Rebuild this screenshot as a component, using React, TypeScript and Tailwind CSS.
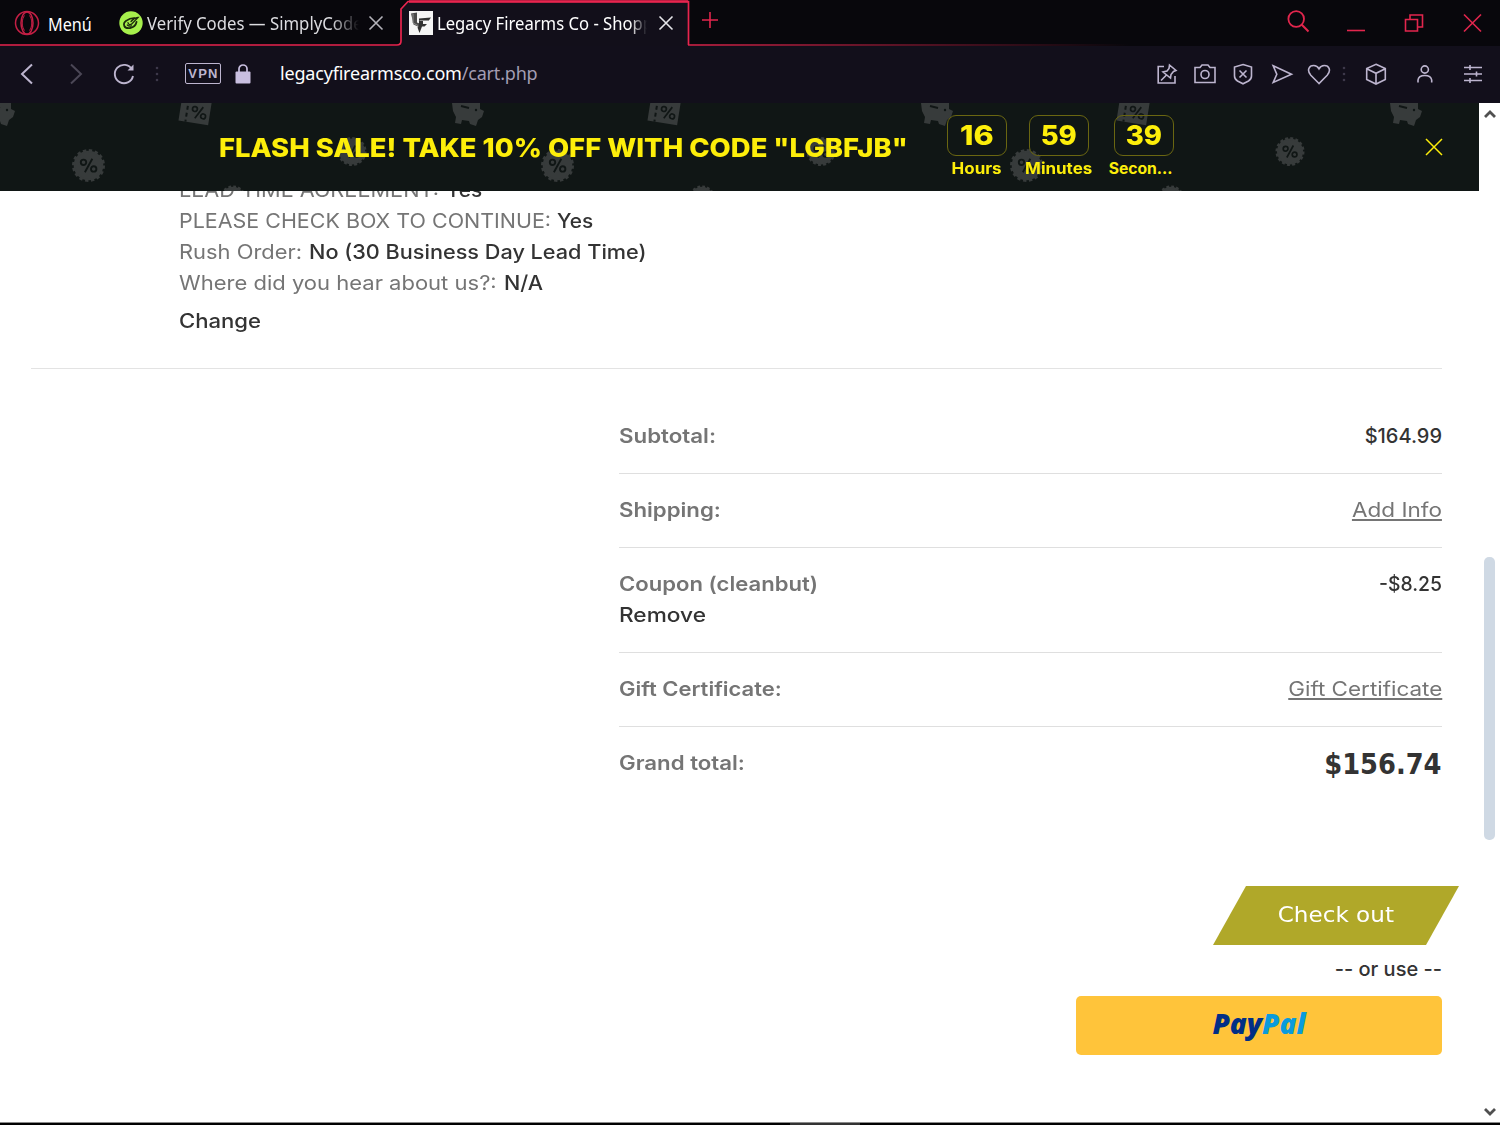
import type { ReactNode } from 'react';
import clsx from 'clsx';

type IconProps = { className?: string; children: ReactNode };

function Icon({ className, children }: IconProps) {
  return (
    <svg
      viewBox="0 0 24 24"
      className={clsx('size-6 shrink-0', className)}
      fill="none"
      stroke="currentColor"
      strokeWidth={1.6}
    >
      {children}
    </svg>
  );
}

function TabOutline() {
  return (
    <svg className="absolute inset-0" width="1500" height="46" fill="none">
      <defs>
        <linearGradient id="fade" gradientUnits="userSpaceOnUse" x1="689" x2="1130" y1="0" y2="0">
          <stop offset="0" stopColor="#e8254f" />
          <stop offset="1" stopColor="#e8254f" stopOpacity="0" />
        </linearGradient>
      </defs>
      <path d="M401 46V9L408 1.5H688.5V46Z" fill="#120f1a" />
      <path d="M0 45H397Q401 45 401 41V9L408 1.5H688.5V45" stroke="#e8254f" strokeWidth="1.7" />
      <path d="M688 1.5H409" stroke="#e8254f" strokeWidth="2.6" />
      <rect x="688" y="44.3" width="442" height="1.4" fill="url(#fade)" />
    </svg>
  );
}

function TabBar() {
  return (
    <div className="relative h-[46px] bg-[#08070c]">
      <TabOutline />
      <div className="relative flex h-[46px] items-center font-['Noto_Sans',sans-serif] text-[18px] text-[#dcdce0]">
        <svg className="ml-[14px] size-[26px] shrink-0" viewBox="0 0 26 26" fill="none" stroke="#c41f45">
          <circle cx="13" cy="13" r="11.5" strokeWidth="1.5" />
          <ellipse cx="13" cy="13" rx="6" ry="11" strokeWidth="1.5" />
          <path d="M10.5 5.5C7.5 9 7.5 17 10.5 20.5M15.5 5.5C18.5 9 18.5 17 15.5 20.5" strokeWidth="1" />
        </svg>
        <span className="ml-[8px] w-[70px] origin-left translate-y-[1px] scale-x-[0.9] text-white">Menú</span>

        <svg className="ml-[1px] size-6 shrink-0" viewBox="0 0 24 24" fill="none" stroke="#1c2a0c" strokeLinecap="round">
          <circle cx="12" cy="12" r="11.7" fill="#a6f04c" stroke="none" />
          <path d="M15.5 7.2Q11 7 7.5 9.6Q4 12 5.3 15Q6.5 17.6 11 17Q16.5 16 17.5 11" strokeWidth="1.8" />
          <path d="M9 11.7Q10 14.5 12.5 13.2L19 6.5Q15 6.8 12 10.5M8.3 14Q10 15.6 12.5 14.8" strokeWidth="1.3" />
        </svg>
        <span className="ml-[4px] h-[26px] w-[212px] overflow-hidden whitespace-nowrap leading-[26px] [mask-image:linear-gradient(to_right,black_87%,transparent)]">
          <span className="inline-block origin-left scale-x-[0.93]">Verify Codes — SimplyCodes</span>
        </span>
        <Icon className="ml-[5px] text-[#b4b3ba]">
          <path d="M5.5 5.5L18.5 18.5M18.5 5.5L5.5 18.5" />
        </Icon>

        <svg className="ml-[21px] size-6 shrink-0" viewBox="0 0 24 24">
          <rect width="24" height="24" fill="#f4f4f4" />
          <path d="M2 2.5L8 1.5V11.5L12 13V17L4.5 13.5Z" fill="#4a4a4a" />
          <path d="M10 7.5L22 6.5L19.5 10H14V13H18L15.5 15.5H13L10.5 22L8.5 16.5L10 15Z" fill="#303030" />
          <path d="M4 3V12L9 14.5M10.5 9.5H20" stroke="#8d8d8d" fill="none" />
        </svg>
        <span className="ml-[4px] h-[26px] w-[210px] overflow-hidden whitespace-nowrap leading-[26px] text-white [mask-image:linear-gradient(to_right,black_92%,transparent)]">
          <span className="inline-block origin-left scale-x-[0.925]">Legacy Firearms Co - Shopping</span>
        </span>
        <Icon className="ml-[7px] text-[#e6e6ea]">
          <path d="M5.5 5.5L18.5 18.5M18.5 5.5L5.5 18.5" />
        </Icon>
        <Icon className="ml-[20px] -translate-y-[3px] text-[#e2264d]">
          <path d="M12 4V20M4 12H20" />
        </Icon>

        <div className="ml-auto flex items-center gap-[34px] pr-[16px] text-[#e2264d]">
          <Icon className="-translate-y-[2px]">
            <circle cx="10.2" cy="10" r="7.8" strokeWidth="1.8" />
            <path d="M15.8 15.8L22.5 22.5" strokeWidth="2" />
          </Icon>
          <Icon>
            <path d="M3 19.5H21" />
          </Icon>
          <Icon>
            <path d="M3.5 8.5H15.5V20H3.5ZM8 8V4H20.5V16H16" />
          </Icon>
          <Icon>
            <path d="M4 3.5L21 20.5M21 3.5L4 20.5" />
          </Icon>
        </div>
      </div>
    </div>
  );
}

function Dots() {
  return (
    <svg className="h-[16px] w-[8px] shrink-0" viewBox="0 0 8 16" fill="#3d384a">
      <circle cx="4" cy="2" r="1.3" />
      <circle cx="4" cy="8" r="1.3" />
      <circle cx="4" cy="14" r="1.3" />
    </svg>
  );
}

function AddressBar() {
  return (
    <div className="flex h-[57px] items-center bg-[#120f1b] pb-[2px] text-[#bdb5cf]">
      <Icon className="ml-[14px]">
        <path d="M18 2.5L8 12L18 21.5" strokeWidth="2" />
      </Icon>
      <Icon className="ml-[26px] text-[#4b4756]">
        <path d="M7 2.5L17 12L7 21.5" strokeWidth="2" />
      </Icon>
      <Icon className="ml-[24px]">
        <path d="M20 7.5A9.2 9.2 0 1 0 21 14" strokeWidth="1.9" />
        <path d="M21.5 2.5V8.5H15.5Z" fill="currentColor" stroke="none" />
      </Icon>
      <span className="ml-[17px] flex">
        <Dots />
      </span>
      <span className="ml-[24px] flex h-[21px] w-[36px] items-center justify-center rounded-[2px] border-[1.5px] border-[#bdb5cf] pl-px font-['Liberation_Sans',sans-serif] text-[13px] font-bold tracking-[1.2px]">
        VPN
      </span>
      <svg className="ml-[14px] h-[20px] w-[16px] shrink-0" viewBox="0 0 16 20">
        <rect x="0.5" y="7.5" width="15" height="12" rx="1" fill="#c9bfe0" />
        <path d="M4 8V4.8A4 3.8 0 0 1 12 4.8V8" fill="none" stroke="#c9bfe0" strokeWidth="1.7" />
      </svg>
      <div className="ml-[29px] whitespace-nowrap font-['Noto_Sans',sans-serif] text-[18px] tracking-[-0.19px] text-[#a39db3]">
        <span className="text-white">legacyfirearmsco.com</span>/cart.php
      </div>

      <div className="ml-auto flex items-center pr-[15px]">
        <Icon>
          <path d="M9 4.5H3.2V21H20V14" />
          <path d="M14.5 3L21 8.5L18.5 9.5L16 12.5L15.5 16L8 10L12 9L14 6.5ZM11.5 13L6 18.5" />
        </Icon>
        <Icon className="ml-[14px]">
          <path d="M2 5.5H7L9 3H15L17 5.5H22V20.5H2Z" />
          <circle cx="12" cy="12.5" r="4" />
        </Icon>
        <Icon className="ml-[14px]">
          <path d="M12 2.5L20.5 5V14Q20.5 17 17.5 19L12 21.8L6.5 19Q3.5 17 3.5 14V5Z" />
          <path d="M8.5 8.5L15.5 15.5M15.5 8.5L8.5 15.5" />
        </Icon>
        <Icon className="ml-[15px]">
          <path d="M3.2 3.8L21.5 12.2L3.2 20.5L6.8 12.2Z" />
        </Icon>
        <Icon className="ml-[13px]">
          <path d="M12 21.5L3.8 13.2C-0.5 8.2 2 3.5 6.7 3.5C9.3 3.5 11 5 12 6.8C13 5 14.7 3.5 17.3 3.5C22 3.5 24.5 8.2 20.2 13.2Z" />
        </Icon>
        <span className="ml-[9px] flex">
          <Dots />
        </span>
        <Icon className="ml-[16px]">
          <path d="M12 2.3L21.3 6.5V17.5L12 22L2.7 17.5V6.5ZM2.7 6.8L12 11.3L21.3 6.8M12 11.3V22" />
        </Icon>
        <Icon className="ml-[25px]">
          <circle cx="11.8" cy="7.5" r="3.6" />
          <path d="M5 20.5V18Q5.5 13.5 11.8 13.5Q18 13.5 18.7 18V20.5" />
        </Icon>
        <Icon className="ml-[24px]">
          <path d="M3 5.5H21M3 12H21M3 18.5H21M9 3V8M15.5 9.5V14.5M9 16V21" />
        </Icon>
      </div>
    </div>
  );
}

function PercentMark() {
  return (
    <g fill="none" stroke="#101615" strokeWidth="1.9">
      <circle cx="-5" cy="-3.2" r="2.7" />
      <circle cx="5.2" cy="3.4" r="2.7" />
      <path d="M3.8 -6.8L-3.6 6.8" />
    </g>
  );
}

function Badge() {
  return (
    <>
      <circle r="14.8" fill="#373b3b" />
      <circle r="14.8" fill="none" stroke="#373b3b" strokeWidth="3.4" strokeDasharray="3.3 2.5" />
      <PercentMark />
    </>
  );
}

function BannerPattern() {
  return (
    <svg className="absolute inset-0" width="1479" height="88">
      {[-469, 0, 469, 938].map((x) => (
        <g key={x} transform={`translate(${x} 0)`}>
          <g transform="translate(88.5 62.5)">
            <Badge />
          </g>
          <g transform="translate(352 48.5) scale(0.88)">
            <Badge />
          </g>
          <g transform="translate(233 96) scale(0.82)">
            <Badge />
          </g>
          <g transform="translate(195 9) rotate(9)">
            <rect x="-15" y="-12" width="30" height="23" fill="#373b3b" />
            <path d="M-8 -12V11" stroke="#101615" strokeWidth="2" strokeDasharray="4 3" />
            <g transform="translate(4 0) scale(0.9)">
              <PercentMark />
            </g>
          </g>
          <g transform="translate(468 9)" fill="#373b3b">
            <path d="M-16 -9H12L12 -3L16 -1L14 5L10 8L8 14L2 12L1 9L-6 8L-7 12L-13 11L-12 5L-15 -1Z" />
            <path d="M-7 -6L1 -4" stroke="#101615" strokeWidth="2" />
            <circle cx="8" cy="-2" r="1.2" fill="#101615" />
          </g>
        </g>
      ))}
    </svg>
  );
}

const countdown = [
  { value: '16', label: 'Hours', box: 'w-[60px]', digits: 'scale-x-[1.13]', text: 'scale-x-[1.06]' },
  { value: '59', label: 'Minutes', box: 'ml-[22px] w-[60px]', digits: 'scale-x-[1.02]', text: 'scale-x-[1.06]' },
  { value: '39', label: 'Secon...', box: 'ml-[25px] w-[60px]', digits: 'scale-x-[1.02]', text: '-translate-x-[3px] scale-x-[0.98]' },
];

function SaleBanner() {
  return (
    <div className="relative h-[88px] w-[1479px] overflow-hidden bg-[#101615] text-[#fdee0a]">
      <BannerPattern />
      <div className="relative flex h-[88px] items-center">
        <p className="ml-[219px] w-[728px] origin-left whitespace-nowrap">
          <span className="inline-block origin-left scale-x-[1.055] text-[26px] font-extrabold">
            FLASH SALE! TAKE 10% OFF WITH CODE "LGBFJB"
          </span>
        </p>
        {countdown.map((c) => (
          <div key={c.label} className={clsx('flex flex-col items-center', c.box)}>
            <div className="flex h-[41px] w-[60px] items-center justify-center rounded-[9px] border border-[#6a6611]">
              <span className={clsx('text-[27px] leading-none font-extrabold', c.digits)}>{c.value}</span>
            </div>
            <span className={clsx('text-[16px] leading-[24px] font-bold', c.text)}>{c.label}</span>
          </div>
        ))}
        <Icon className="mr-[33px] ml-auto">
          <path d="M4 4L20 20M20 4L4 20" strokeWidth="1.5" />
        </Icon>
      </div>
    </div>
  );
}

const options = [
  { label: 'LEAD TIME AGREEMENT:', value: 'Yes', width: 'w-[267px]', stretch: 'scale-x-[1.087]', valueStretch: 'scale-x-[1.04]' },
  { label: 'PLEASE CHECK BOX TO CONTINUE:', value: 'Yes', width: 'w-[378px]', stretch: 'scale-x-[1.073]', valueStretch: 'scale-x-[1.04]' },
  { label: 'Rush Order:', value: 'No (30 Business Day Lead Time)', width: 'w-[130px]', stretch: 'scale-x-[1.094]', valueStretch: 'scale-x-[1.083]' },
  { label: 'Where did you hear about us?:', value: 'N/A', width: 'w-[325px]', stretch: 'scale-x-[1.1]', valueStretch: 'scale-x-[1.077]' },
];

type RowProps = { label: string; stretch: string; extra?: ReactNode; last?: boolean; children: ReactNode };

function TotalRow({ label, stretch, extra, last, children }: RowProps) {
  return (
    <div className={clsx('flex justify-between py-[21px]', last ? 'h-[74px]' : 'border-b border-[#dfdfdf]')}>
      <div>
        <div className={clsx('origin-left font-semibold text-[#757575]', stretch)}>{label}</div>
        {extra}
      </div>
      <div>{children}</div>
    </div>
  );
}

function Cart() {
  return (
    <main className="flex h-[931px] w-[1479px] flex-col overflow-hidden bg-white pr-[37px] pl-[31px] text-[20px] leading-[31px] whitespace-nowrap text-[#333]">
      <div className="-mt-[16px] border-b border-[#e3e3e3] pb-[31px] pl-[148px]">
        {options.map((o) => (
          <div key={o.label} className="flex">
            <span className={o.width}>
              <span className={clsx('inline-block origin-left text-[#757575]', o.stretch)}>{o.label}</span>
            </span>
            <span className={clsx('origin-left font-medium', o.valueStretch)}>{o.value}</span>
          </div>
        ))}
        <div className="mt-[7px]">
          <span className="inline-block origin-left scale-x-[1.105] font-medium">Change</span>
        </div>
      </div>

      <div className="mt-[31px] ml-auto w-[823px]">
        <TotalRow label="Subtotal:" stretch="scale-x-[1.115]">
          <span className="font-medium">$164.99</span>
        </TotalRow>
        <TotalRow label="Shipping:" stretch="scale-x-[1.11]">
          <a className="inline-block origin-right scale-x-[1.126] text-[#757575] underline underline-offset-2">Add Info</a>
        </TotalRow>
        <TotalRow
          label="Coupon (cleanbut)"
          stretch="scale-x-[1.104]"
          extra={<div className="origin-left scale-x-[1.133] font-medium w-[77px]">Remove</div>}
        >
          <span className="inline-block origin-right scale-x-[0.97] font-medium">-$8.25</span>
        </TotalRow>
        <TotalRow label="Gift Certificate:" stretch="scale-x-[1.1]">
          <a className="inline-block origin-right scale-x-[1.122] text-[#757575] underline underline-offset-2">
            Gift Certificate
          </a>
        </TotalRow>
        <TotalRow label="Grand total:" stretch="scale-x-[1.112]" last>
          <span className="inline-block origin-right translate-y-[1px] scale-x-[0.92] font-['DejaVu_Sans',sans-serif] text-[28px] leading-[31px] font-bold">
            $156.74
          </span>
        </TotalRow>
      </div>

      <button className="mt-[85px] -mr-[17px] ml-auto flex h-[59px] w-[246px] shrink-0 items-center justify-center bg-[#b0a829] text-white [clip-path:polygon(33px_0,100%_0,213px_100%,0_100%)]">
        <span className="scale-x-[1.1] font-['DejaVu_Sans',sans-serif] text-[21px]">Check out</span>
      </button>
      <div className="mt-[9px] ml-auto h-[42px] font-medium">-- or use --</div>
      <button className="ml-auto flex h-[59px] w-[366px] shrink-0 items-center justify-center rounded-[5px] bg-[#ffc43a] pb-[4px] font-['Open_Sans',sans-serif] text-[28px] font-extrabold italic">
        <span className="text-[#012f86]">Pay</span>
        <span className="text-[#0a9bdc]">Pal</span>
      </button>
    </main>
  );
}

function Scrollbar() {
  return (
    <div className="flex w-[21px] flex-col items-center bg-white py-[3px] pt-[4px] text-[#505050]">
      <svg className="size-[14px]" viewBox="0 0 14 14" fill="none" stroke="currentColor" strokeWidth="2.8">
        <path d="M2 10L7 5L12 10" />
      </svg>
      <div className="mt-[436px] h-[283px] w-[11px] rounded-[5px] bg-[#cfd9e4]" />
      <svg className="mt-auto size-[14px]" viewBox="0 0 14 14" fill="none" stroke="currentColor" strokeWidth="2.8">
        <path d="M2 4L7 9L12 4" />
      </svg>
    </div>
  );
}

export default function App() {
  return (
    <div className="flex h-[1125px] w-[1500px] flex-col overflow-hidden bg-white font-['Inter',sans-serif]">
      <TabBar />
      <AddressBar />
      <div className="flex h-[1019px]">
        <div className="w-[1479px]">
          <SaleBanner />
          <Cart />
        </div>
        <Scrollbar />
      </div>
      <div className="flex h-[3px] justify-center border-t border-[#8a8a8a] bg-black">
        <div className="mr-[-150px] h-full w-[70px] -translate-x-[0px] bg-[#333]" />
      </div>
    </div>
  );
}
